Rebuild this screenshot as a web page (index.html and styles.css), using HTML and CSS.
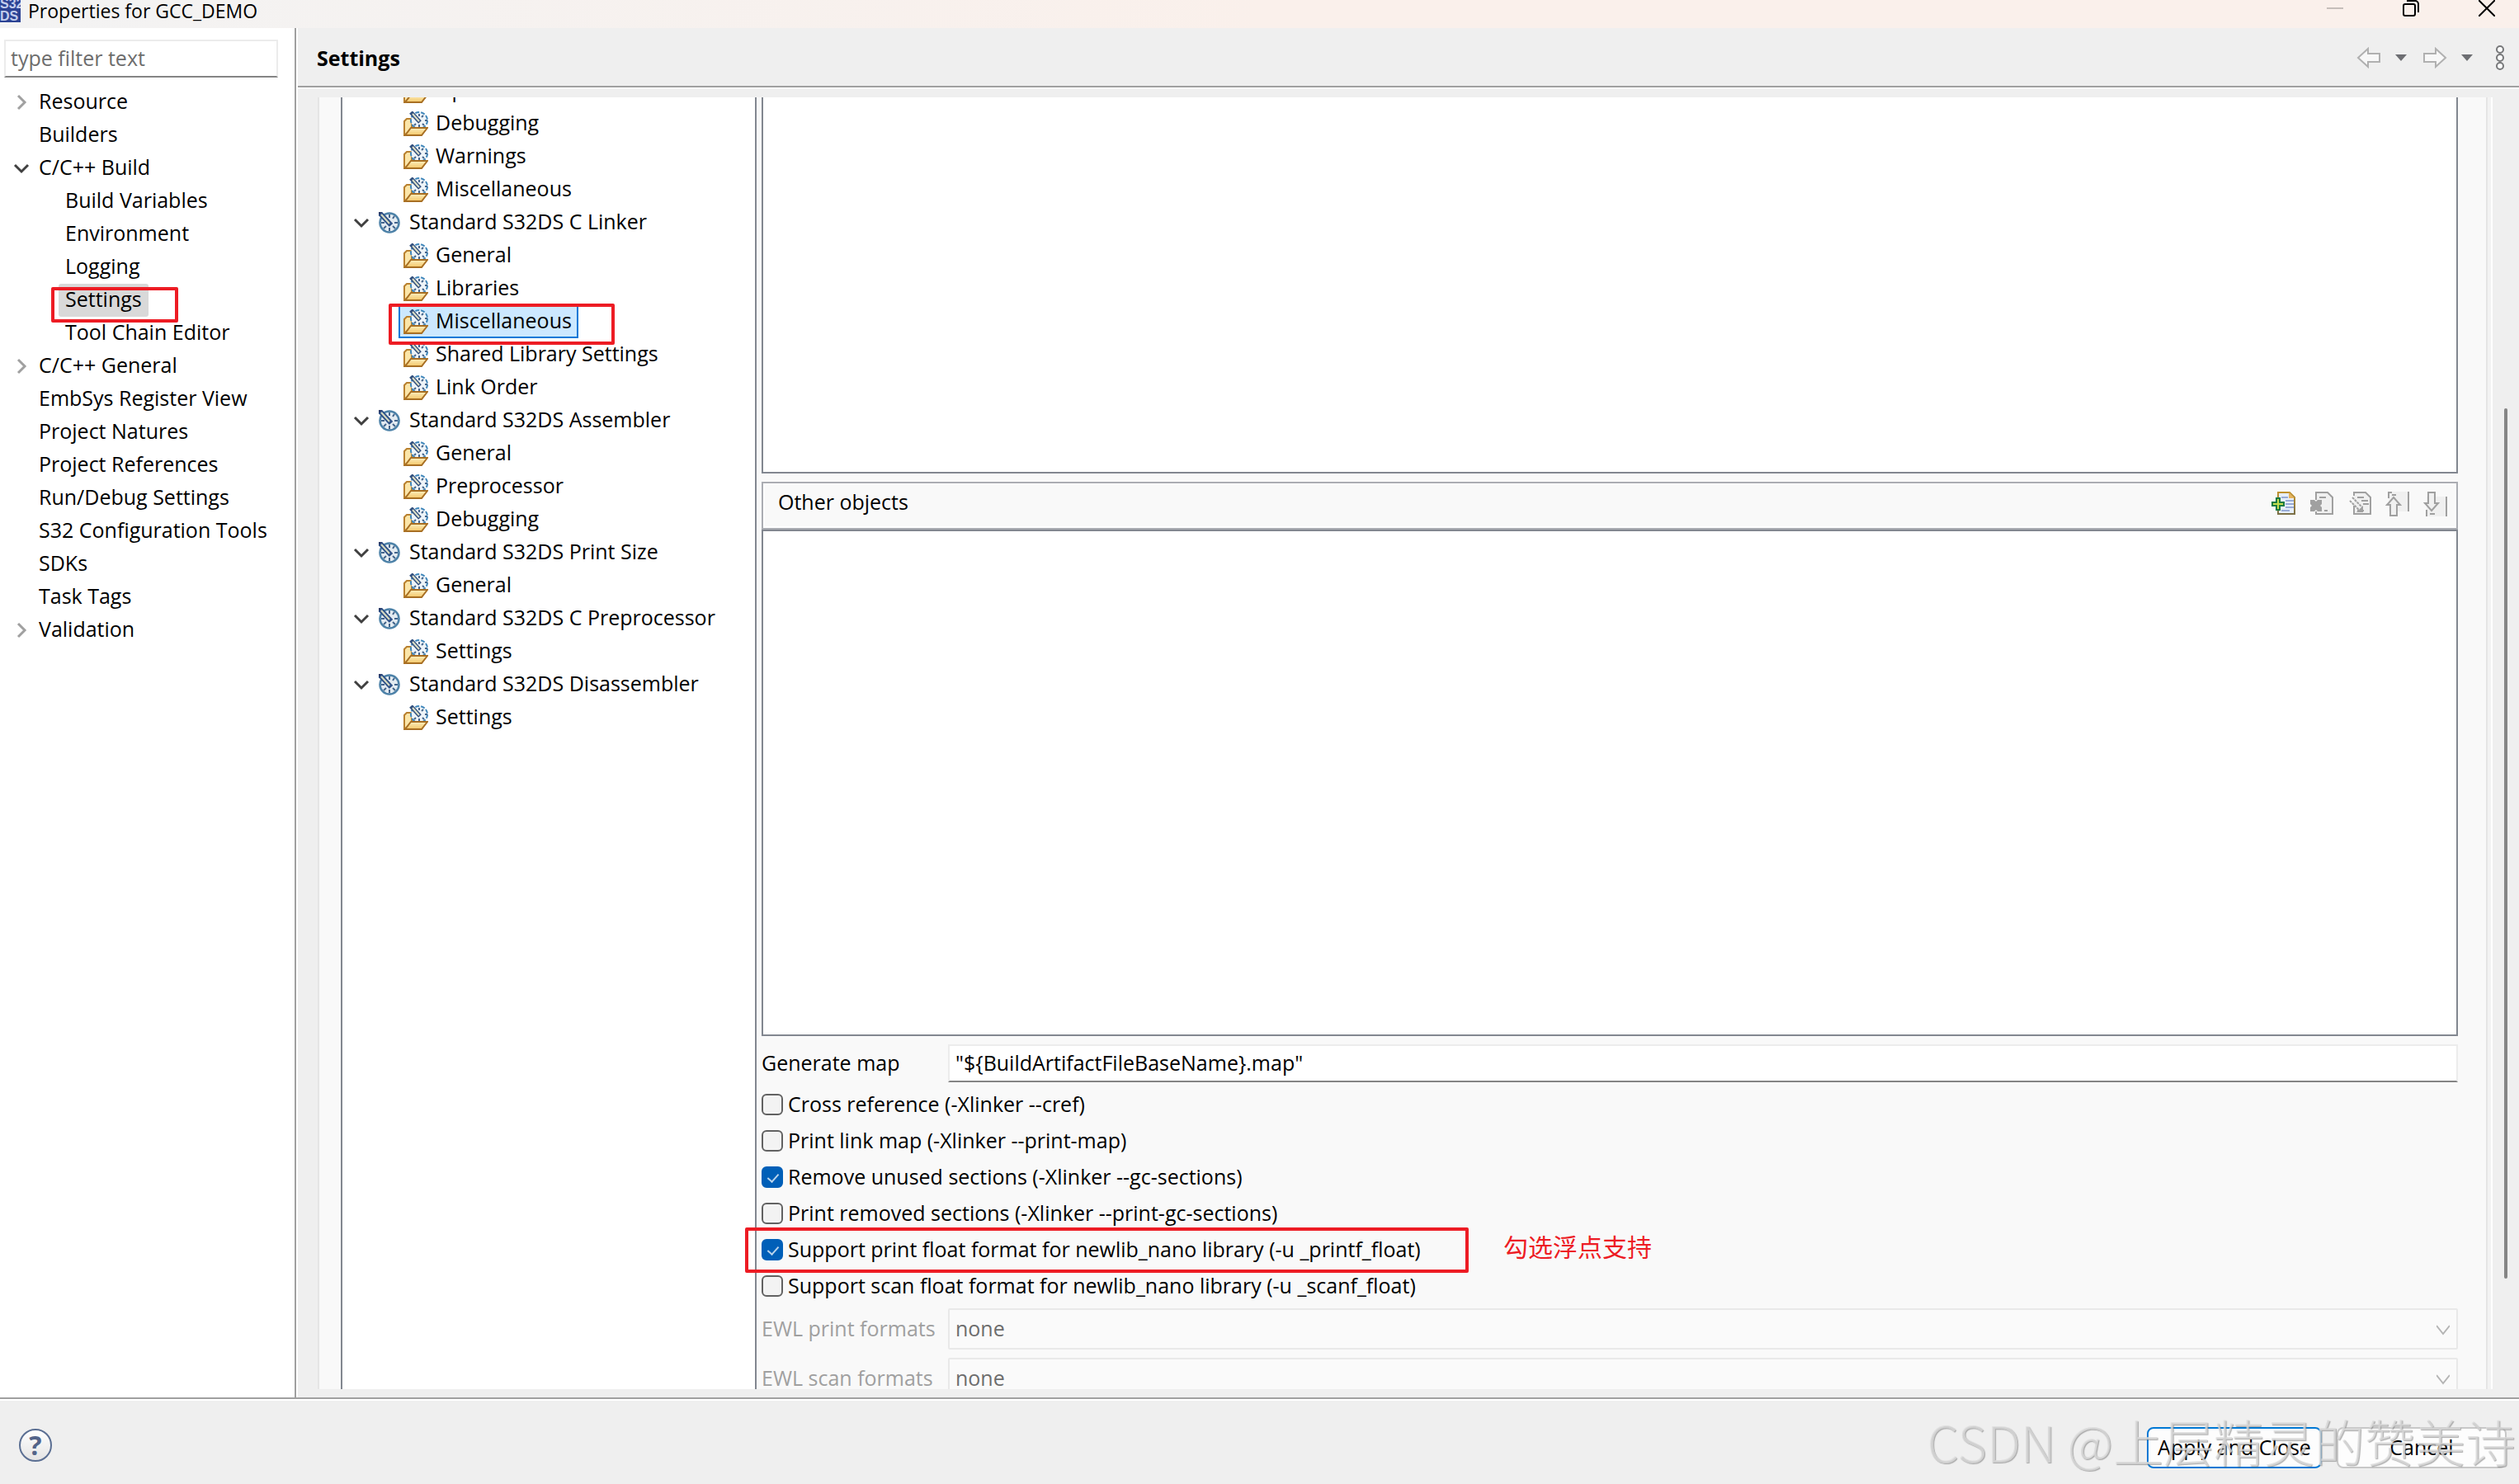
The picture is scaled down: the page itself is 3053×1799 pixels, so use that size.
FILE: index.html
```
<!DOCTYPE html>
<html lang="en">
<head>
    <meta charset="UTF-8">
    <meta name="viewport" content="width=device-width, initial-scale=1.0">
    <title>Properties for GCC_DEMO</title>
    <link rel="stylesheet" href="styles.css">
</head>
<body>
    <!-- Shared icons -->
    <svg class="icon-defs" aria-hidden="true">
        <linearGradient id="folderFill" x1="0" y1="0" x2="0" y2="1">
            <stop offset="0" stop-color="#fdf0c0"/>
            <stop offset="1" stop-color="#f3c667"/>
        </linearGradient>
        <linearGradient id="pageEdge" x1="0" y1="0" x2="0" y2="1">
            <stop offset="0" stop-color="#c0922f"/>
            <stop offset="1" stop-color="#7b7048"/>
        </linearGradient>
        <symbol id="right" viewBox="0 0 20 20"><path d="M6 2l8 8-8 8" fill="none" stroke="#a0a0a0" stroke-width="3"/></symbol>
        <symbol id="down" viewBox="0 0 20 20"><path d="M2 6l8 8 8-8" fill="none" stroke="#404040" stroke-width="3"/></symbol>
        <symbol id="tool" viewBox="0 0 26 26">
            <circle cx="13" cy="13" r="11.5" fill="#e3ebf1" stroke="#4d82a8" stroke-width="2.5"/>
            <path d="M13 3v4M13 19v4M3 13h4M19 13h4M19 5l-2 3M6 20l3-3M20 20l-3-3" stroke="#44658c" stroke-width="2"/>
            <path d="M1 1l14 15" stroke="#2f5288" stroke-width="6"/>
            <path d="M3 3l10 11" stroke="#d8dcc0" stroke-width="2"/>
            <path d="M0 0h4L0 4z" fill="#2b3a68"/>
        </symbol>
        <symbol id="folder" viewBox="0 0 30 30">
            <path d="M1 29V12l3-3h6v13z" fill="#fbe5a8" stroke="#b9812f" stroke-width="2"/>
            <circle cx="19" cy="11" r="10" fill="#eef4f8" stroke="#3f86ba" stroke-width="2" stroke-dasharray="5 2"/>
            <path d="M19 3v3M26 11h3M13 17l2-2M25 17l-2-2M19 16v3M24 5l-2 2" stroke="#44658c" stroke-width="2"/>
            <path d="M9 1l11 12" stroke="#33517f" stroke-width="5"/>
            <path d="M11 3l8 9" stroke="#dcdfc6" stroke-width="2"/>
            <path d="M9 20h20l-7 9H2z" fill="url(#folderFill)" stroke="#a86f23" stroke-width="2"/>
        </symbol>
    </svg>

    <div class="dialog">
        <header class="titlebar">
            <span class="app-icon">S32<br>DS</span>
            <h1>Properties for GCC_DEMO</h1>
            <div class="window-buttons">
                <button type="button" aria-label="Minimize"><svg width="20" height="20"><path d="M0 10h20" stroke="#c6beba" stroke-width="2"/></svg></button>
                <button type="button" aria-label="Restore"><svg width="20" height="20" fill="none" stroke="#000" stroke-width="2"><rect x="1" y="5" width="14" height="14" rx="2"/><path d="M5 1h10a4 4 0 0 1 4 4v10"/></svg></button>
                <button type="button" aria-label="Close"><svg width="20" height="20"><path d="M0 0l20 20M20 0L0 20" stroke="#000" stroke-width="2"/></svg></button>
            </div>
        </header>

        <div class="main">
            <nav class="sidebar">
                <input type="text" class="filter" placeholder="type filter text" aria-label="Filter">
                <ul class="tree">
                    <li><svg class="arrow"><use href="#right"/></svg><span>Resource</span></li>
                    <li><span>Builders</span></li>
                    <li><svg class="arrow"><use href="#down"/></svg><span>C/C++ Build</span></li>
                    <li class="child"><span>Build Variables</span></li>
                    <li class="child"><span>Environment</span></li>
                    <li class="child"><span>Logging</span></li>
                    <li class="child current"><span>Settings</span><i class="mark mark-page"></i></li>
                    <li class="child"><span>Tool Chain Editor</span></li>
                    <li><svg class="arrow"><use href="#right"/></svg><span>C/C++ General</span></li>
                    <li><span>EmbSys Register View</span></li>
                    <li><span>Project Natures</span></li>
                    <li><span>Project References</span></li>
                    <li><span>Run/Debug Settings</span></li>
                    <li><span>S32 Configuration Tools</span></li>
                    <li><span>SDKs</span></li>
                    <li><span>Task Tags</span></li>
                    <li><svg class="arrow"><use href="#right"/></svg><span>Validation</span></li>
                </ul>
            </nav>

            <section class="page">
                <div class="page-header">
                    <h2>Settings</h2>
                    <div class="history">
                        <button type="button" aria-label="Back"><svg width="30" height="26"><path d="M2 13L14 2v6h14v10H14v6z" fill="#f8f8f8" stroke="#b0b0b0" stroke-width="2"/></svg></button>
                        <button type="button" aria-label="Back history"><svg width="14" height="8"><path d="M0 0h14L7 8z" fill="#6d6e72"/></svg></button>
                        <button type="button" aria-label="Forward"><svg width="30" height="26"><path d="M28 13L16 2v6H2v10h14v6z" fill="#f8f8f8" stroke="#b0b0b0" stroke-width="2"/></svg></button>
                        <button type="button" aria-label="Forward history"><svg width="14" height="8"><path d="M0 0h14L7 8z" fill="#6d6e72"/></svg></button>
                        <button type="button" aria-label="Menu"><svg width="10" height="30" fill="#fff" stroke="#77787a" stroke-width="2"><circle cx="5" cy="5" r="4"/><circle cx="5" cy="15" r="4"/><circle cx="5" cy="25" r="4"/></svg></button>
                    </div>
                </div>

                <div class="page-body">
                    <div class="tab">
                        <ul class="tree tools">
                            <li class="child"><svg class="folder"><use href="#folder"/></svg><span>Optimization</span></li>
                            <li class="child"><svg class="folder"><use href="#folder"/></svg><span>Debugging</span></li>
                            <li class="child"><svg class="folder"><use href="#folder"/></svg><span>Warnings</span></li>
                            <li class="child"><svg class="folder"><use href="#folder"/></svg><span>Miscellaneous</span></li>
                            <li><svg class="arrow"><use href="#down"/></svg><svg class="tool"><use href="#tool"/></svg><span>Standard S32DS C Linker</span></li>
                            <li class="child"><svg class="folder"><use href="#folder"/></svg><span>General</span></li>
                            <li class="child"><svg class="folder"><use href="#folder"/></svg><span>Libraries</span></li>
                            <li class="child selected"><div class="selection"><svg class="folder"><use href="#folder"/></svg><span>Miscellaneous</span></div><i class="mark mark-tool"></i></li>
                            <li class="child"><svg class="folder"><use href="#folder"/></svg><span>Shared Library Settings</span></li>
                            <li class="child"><svg class="folder"><use href="#folder"/></svg><span>Link Order</span></li>
                            <li><svg class="arrow"><use href="#down"/></svg><svg class="tool"><use href="#tool"/></svg><span>Standard S32DS Assembler</span></li>
                            <li class="child"><svg class="folder"><use href="#folder"/></svg><span>General</span></li>
                            <li class="child"><svg class="folder"><use href="#folder"/></svg><span>Preprocessor</span></li>
                            <li class="child"><svg class="folder"><use href="#folder"/></svg><span>Debugging</span></li>
                            <li><svg class="arrow"><use href="#down"/></svg><svg class="tool"><use href="#tool"/></svg><span>Standard S32DS Print Size</span></li>
                            <li class="child"><svg class="folder"><use href="#folder"/></svg><span>General</span></li>
                            <li><svg class="arrow"><use href="#down"/></svg><svg class="tool"><use href="#tool"/></svg><span>Standard S32DS C Preprocessor</span></li>
                            <li class="child"><svg class="folder"><use href="#folder"/></svg><span>Settings</span></li>
                            <li><svg class="arrow"><use href="#down"/></svg><svg class="tool"><use href="#tool"/></svg><span>Standard S32DS Disassembler</span></li>
                            <li class="child"><svg class="folder"><use href="#folder"/></svg><span>Settings</span></li>
                        </ul>

                        <form class="options">
                            <div class="list flags"></div>
                            <div class="list-header">
                                <span>Other objects</span>
                                <div class="list-buttons">
                                    <button type="button" aria-label="Add">
                                        <svg viewBox="0 0 32 32"><path d="M8 3h14l6 6v20H8z" fill="#e6eefa" stroke="url(#pageEdge)" stroke-width="2"/><path d="M21 3v7h7z" fill="#e5b35c"/><path d="M12 9h8M17 13h10M17 17h10M17 21h10M12 25h10" stroke="#98abd6" stroke-width="2"/><path d="M6 10h4v5h5v4h-5v5H6v-5H1v-4h5z" fill="#c3dc4c" stroke="#187a43" stroke-width="2"/></svg>
                                    </button>
                                    <button type="button" aria-label="Delete" disabled>
                                        <svg viewBox="0 0 32 32"><path d="M8 12V3h14l6 6v20H8v-3" fill="#f0f0f0" stroke="#a0a0a0" stroke-width="2"/><path d="M12 9h8M18 25h4" stroke="#a0a0a0" stroke-width="2"/><path d="M1 12h5l2 2 2-2h5v5l-2 2 2 2v5h-5l-2-2-2 2H1v-5l2-2-2-2z" fill="#a0a0a0"/></svg>
                                    </button>
                                    <button type="button" aria-label="Edit" disabled>
                                        <svg viewBox="0 0 32 32"><path d="M8 7V3h14l6 6v20H8V19" fill="#f0f0f0" stroke="#a0a0a0" stroke-width="2"/><path d="M12 9h8M17 13h8M19 17h7M12 25h8" stroke="#a0a0a0" stroke-width="2"/><path d="M3 13l11 11M6 9l12 12" stroke="#a0a0a0" stroke-width="2" stroke-dasharray="3 1"/><path d="M19 19v8h-8z" fill="#a0a0a0"/></svg>
                                    </button>
                                    <button type="button" aria-label="Move up" disabled>
                                        <svg viewBox="0 0 32 32"><path d="M4 2h24v24H4z" fill="#f0f0f0"/><path d="M4 2v8M28 2v24M4 3h4M8 6h5" stroke="#a0a0a0" stroke-width="2"/><path d="M10 9l8 9h-4v13H6V18H2z" fill="#f0f0f0" stroke="#a0a0a0" stroke-width="2"/></svg>
                                    </button>
                                    <button type="button" aria-label="Move down" disabled>
                                        <svg viewBox="0 0 32 32"><path d="M4 8h24v24H4z" fill="#f0f0f0"/><path d="M4 24v8M28 8v24M8 29h6" stroke="#a0a0a0" stroke-width="2"/><path d="M10 25l8-9h-4V3H6v13H2z" fill="#f0f0f0" stroke="#a0a0a0" stroke-width="2"/></svg>
                                    </button>
                                </div>
                            </div>
                            <div class="list objects"></div>

                            <div class="field">
                                <label for="mapFile">Generate map</label>
                                <input type="text" id="mapFile" value="&quot;${BuildArtifactFileBaseName}.map&quot;">
                            </div>

                            <div class="checks">
                                <label><input type="checkbox">Cross reference (-Xlinker --cref)</label>
                                <label><input type="checkbox">Print link map (-Xlinker --print-map)</label>
                                <label><input type="checkbox" checked>Remove unused sections (-Xlinker --gc-sections)</label>
                                <label><input type="checkbox">Print removed sections (-Xlinker --print-gc-sections)</label>
                                <label><input type="checkbox" checked>Support print float format for newlib_nano library (-u _printf_float)<i class="mark mark-float"></i><em class="note" lang="zh-CN">勾选浮点支持</em></label>
                                <label><input type="checkbox">Support scan float format for newlib_nano library (-u _scanf_float)</label>
                            </div>

                            <div class="field disabled">
                                <label for="ewlPrint">EWL print formats</label>
                                <div class="combo">
                                    <select id="ewlPrint" disabled><option>none</option></select>
                                    <svg width="16" height="14"><path d="M0 1l8 10 8-10" fill="none" stroke="#b4b4b4" stroke-width="2"/></svg>
                                </div>
                            </div>
                            <div class="field disabled">
                                <label for="ewlScan">EWL scan formats</label>
                                <div class="combo">
                                    <select id="ewlScan" disabled><option>none</option></select>
                                    <svg width="16" height="14"><path d="M0 1l8 10 8-10" fill="none" stroke="#b4b4b4" stroke-width="2"/></svg>
                                </div>
                            </div>
                        </form>
                    </div>
                    <div class="scrollbar"><div class="thumb"></div></div>
                </div>
            </section>
        </div>

        <footer class="footer">
            <button type="button" class="help" aria-label="Help">?</button>
            <button type="button" class="btn primary">Apply and Close</button>
            <button type="button" class="btn">Cancel</button>
            <div class="watermark" lang="zh-CN">CSDN @上层精灵的赞美诗</div>
        </footer>
    </div>
</body>
</html>
```
FILE: styles.css
```
* {
  box-sizing: border-box;
}

body {
  margin: 0;
  font-family: "Open Sans", "Noto Sans CJK SC", sans-serif;
  font-size: 25px;
  color: #000;
}

h1, h2, ul {
  margin: 0;
  padding: 0;
  font-size: inherit;
}

button, input, select {
  font: inherit;
  color: inherit;
}

svg {
  display: block;
  flex: none;
}

.icon-defs {
  position: absolute;
  width: 0;
  height: 0;
}

.dialog {
  display: flex;
  flex-direction: column;
  height: 100vh;
  overflow: hidden;
  background: #efefef;
}

/* Title bar */
.titlebar {
  display: flex;
  align-items: flex-start;
  height: 34px;
  overflow: hidden;
  background: linear-gradient(90deg, #f3f3f3, #faf0eb 50%);
}

.titlebar h1 {
  flex: 1;
  margin-left: 9px;
  font-size: 23px;
  font-weight: normal;
  line-height: 26px;
}

.app-icon {
  display: flex;
  flex-direction: column;
  justify-content: flex-end;
  width: 25px;
  height: 27px;
  overflow: hidden;
  background: #2c4394;
  color: #c3cdec;
  font-family: "Liberation Sans", sans-serif;
  font-size: 16px;
  font-weight: bold;
  line-height: 15px;
}

.window-buttons {
  display: flex;
  gap: 72px;
  margin-right: 29px;
}

.window-buttons button,
.history button,
.list-buttons button {
  padding: 0;
  border: none;
  background: none;
}

/* Body */
.main {
  flex: 1;
  display: flex;
  min-height: 0;
  border-bottom: 2px solid #a0a0a0;
}

.sidebar {
  width: 359px;
  padding-top: 14px;
  background: #fff;
  border-right: 2px solid #a0a0a0;
}

.filter {
  display: block;
  width: 332px;
  height: 46px;
  margin: 0 0 10px 5px;
  padding: 0 6px 2px;
  border: 2px solid #ececec;
  border-bottom-color: #858585;
}

.filter::placeholder {
  color: #6d6d6d;
}

.tree {
  list-style: none;
}

.tree li {
  position: relative;
  display: flex;
  align-items: center;
  height: 40px;
  line-height: 36px;
  padding-left: 47px;
  white-space: nowrap;
}

.tree span {
  padding-bottom: 4px;
}

.tree .arrow {
  width: 20px;
  height: 20px;
  margin: 0 11px 0 -31px;
}

.tree .child {
  padding-left: 79px;
}

.tree .current span {
  margin-left: -8px;
  padding: 0 8px 4px;
  background: #d9d9d9;
  border-radius: 3px;
}

.page {
  flex: 1;
  display: flex;
  flex-direction: column;
  min-width: 0;
  border-left: 2px solid #fff;
}

.page-header {
  display: flex;
  align-items: center;
  justify-content: space-between;
  height: 74px;
  padding: 0 18px 0 23px;
  border-bottom: 2px solid #fff;
  box-shadow: inset 0 -2px #a0a0a0;
}

.history {
  display: flex;
  align-items: center;
}

.history button:nth-child(odd) {
  margin-right: 17px;
}

.history button:nth-child(even) {
  margin-right: 19px;
}

.history button:nth-child(4) {
  margin-right: 28px;
}

.history button:last-child {
  margin-right: 0;
}

.page-body {
  flex: 1;
  display: flex;
  min-height: 0;
  margin: 10px 0;
  padding-left: 24px;
  overflow: hidden;
}

.tab {
  flex: 1;
  display: flex;
  gap: 6px;
  min-width: 0;
  padding: 0 34px 0 26px;
  background: #f9f9f9;
  border-left: 2px solid #e5e5e5;
  border-right: 2px solid #e5e5e5;
}

.scrollbar {
  width: 38px;
  padding: 377px 14px 0 0;
  border-left: 4px solid #f3f3f3;
  box-shadow: inset 2px 0 #fff;
}

.thumb {
  width: 4px;
  height: 1055px;
  margin-left: auto;
  border-radius: 2px;
  background: #858585;
}

/* Tool tree */
.tools {
  width: 504px;
  background: #fff;
  border-left: 2px solid #828790;
  border-right: 2px solid #828790;
}

.tools li:first-child {
  margin-top: -28px;
}

.tools li {
  padding-left: 44px;
}

.tools .child {
  padding-left: 74px;
}

.tools .arrow {
  margin: 0 11px 0 -31px;
}

.tools .tool {
  width: 26px;
  height: 26px;
  margin-right: 11px;
}

.tools .folder {
  width: 30px;
  height: 30px;
  margin-right: 9px;
}

.selection {
  display: flex;
  align-items: center;
  height: 40px;
  margin-left: -6px;
  padding: 0 6px 0 4px;
  background: #cce8ff;
  border: 2px solid #0078d7;
}

/* Red highlight boxes */
.mark {
  position: absolute;
  z-index: 1;
  border: 4px solid #ed1c24;
  border-radius: 2px;
}

.mark-page {
  left: 62px;
  top: 4px;
  width: 154px;
  height: 43px;
}

.mark-tool {
  left: 56px;
  top: -2px;
  width: 274px;
  height: 50px;
}

.mark-float {
  left: -20px;
  top: -4px;
  width: 877px;
  height: 55px;
}

.note {
  position: absolute;
  left: 899px;
  top: -4px;
  color: #ed1c24;
  font-size: 30px;
  font-style: normal;
  white-space: nowrap;
}

/* Options */
.options {
  flex: 1;
  min-width: 0;
}

.list {
  background: #fff;
  border: 2px solid #828790;
}

.flags {
  height: 456px;
  margin-bottom: 10px;
  border-top: none;
}

.objects {
  height: 614px;
  margin-bottom: 10px;
}

.list-header {
  display: flex;
  align-items: center;
  justify-content: space-between;
  height: 58px;
  padding: 0 8px 6px 18px;
  border: 2px solid #abadb3;
  box-shadow: inset 0 0 0 2px #fff;
}

.list-header span {
  padding-bottom: 4px;
}

.list-buttons {
  display: flex;
  gap: 14px;
}

.list-buttons svg {
  width: 32px;
  height: 32px;
}

.field {
  display: flex;
  align-items: center;
  margin-bottom: 10px;
}

.field > label {
  width: 226px;
  padding-bottom: 2px;
}

.field input {
  flex: 1;
  height: 46px;
  padding: 0 7px 2px;
  background: #fff;
  border: 2px solid #ececec;
  border-bottom-color: #858585;
}

.checks {
  margin: -6px 0 6px;
}

.checks label {
  position: relative;
  display: flex;
  align-items: center;
  width: max-content;
  height: 44px;
}

.checks input {
  appearance: none;
  position: relative;
  width: 26px;
  height: 26px;
  margin: 2px 6px 0 0;
  background: #f3f3f3;
  border: 2px solid #626262;
  border-radius: 6px;
}

.checks input:checked {
  background: #005fb8;
  border-color: #005fb8;
}

.checks input:checked::after {
  content: "";
  position: absolute;
  left: 8px;
  top: 4px;
  width: 6px;
  height: 11px;
  border: solid #b9d4ec;
  border-width: 0 2px 2px 0;
  transform: rotate(42deg);
}

.disabled {
  color: #a0a0a0;
}

.combo {
  position: relative;
  flex: 1;
}

.combo select {
  appearance: none;
  display: block;
  width: 100%;
  height: 50px;
  padding: 0 7px 2px;
  background: #fafafa;
  border: 2px solid #e9e9e9;
  border-radius: 2px;
  color: #6d6d6d;
  opacity: 1;
}

.combo svg {
  position: absolute;
  right: 10px;
  top: 20px;
}

/* Footer */
.footer {
  position: relative;
  display: flex;
  align-items: center;
  gap: 18px;
  height: 103px;
  padding: 13px 15px 0 23px;
  border-top: 2px solid #fff;
}

.help {
  width: 40px;
  height: 40px;
  margin: 0 auto 6px 0;
  padding: 0;
  border: 2px solid #5b6f93;
  border-radius: 50%;
  background: linear-gradient(#fff, #e4e4e4);
  color: #536489;
  font-size: 32px;
  font-weight: bold;
  line-height: 34px;
}

.btn {
  width: 206px;
  height: 50px;
  padding: 0 0 2px;
  background: #fdfdfd;
  border: 2px solid #c8c8c8;
  border-radius: 8px;
}

.primary {
  width: 212px;
  border-color: #0078d4;
}

.watermark {
  position: absolute;
  right: 4px;
  top: 5px;
  color: rgba(222, 222, 222, 0.75);
  font-family: "Noto Sans CJK SC", sans-serif;
  font-size: 61px;
  font-weight: 300;
  line-height: 88px;
  text-shadow: 1px 1px 1px rgba(120, 120, 120, 0.6);
  white-space: nowrap;
  pointer-events: none;
}
```
